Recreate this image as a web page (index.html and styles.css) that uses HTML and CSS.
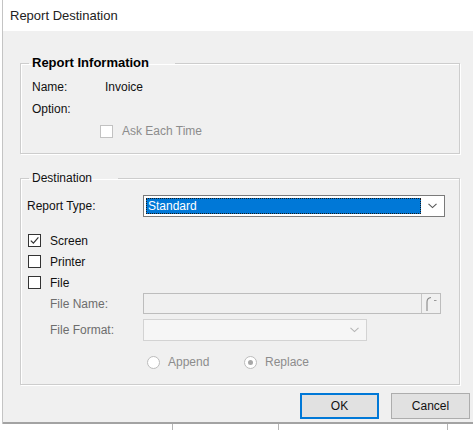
FILE: index.html
```html
<!DOCTYPE html>
<html lang="en">
<head>
    <meta charset="UTF-8">
    <meta name="viewport" content="width=device-width, initial-scale=1.0">
    <title>Report Destination</title>
    <link rel="stylesheet" href="styles.css">
</head>
<body>
    <div class="dialog">
        <div class="titlebar">Report Destination</div>
        <div class="client">
            <fieldset class="group info">
                <legend>Report Information</legend>
                <div class="row">
                    <span class="label">Name:</span>
                    <span>Invoice</span>
                </div>
                <div class="row">
                    <span class="label">Option:</span>
                </div>
                <div class="row ask">
                    <span class="check disabled"></span>
                    <span class="muted">Ask Each Time</span>
                </div>
            </fieldset>

            <fieldset class="group dest">
                <legend>Destination</legend>
                <div class="row type-row">
                    <span class="label type-label">Report Type:</span>
                    <div class="combo">
                        <span class="selected">Standard</span>
                        <span class="arrow">
                            <svg width="9" height="6" viewBox="0 0 9 6"><path d="M0.5 0.8 L4.5 4.6 L8.5 0.8" fill="none" stroke="#555" stroke-width="1.1"/></svg>
                        </span>
                    </div>
                </div>
                <div class="checks">
                    <div class="crow">
                        <span class="check">
                            <svg width="11" height="11" viewBox="0 0 11 11"><path d="M1.8 5.6 L4.4 8.2 L9.4 2.4" fill="none" stroke="#333" stroke-width="1.2"/></svg>
                        </span>
                        Screen
                    </div>
                    <div class="crow"><span class="check"></span>Printer</div>
                    <div class="crow"><span class="check"></span>File</div>
                </div>
                <div class="row file-name">
                    <span class="label file-label">File Name:</span>
                    <div class="textbox">
                        <span class="browse">
                            <svg width="18" height="19" viewBox="0 0 18 19"><path d="M5 17 L5 8 Q5 4 9 3.5" fill="none" stroke="#888" stroke-width="1.1"/><path d="M12 6.5 H14.5" stroke="#999" stroke-width="1"/></svg>
                        </span>
                    </div>
                </div>
                <div class="row file-format">
                    <span class="label file-label">File Format:</span>
                    <div class="combo off">
                        <span class="arrow">
                            <svg width="9" height="6" viewBox="0 0 9 6"><path d="M0.5 0.8 L4.5 4.6 L8.5 0.8" fill="none" stroke="#b5b5b5" stroke-width="1.1"/></svg>
                        </span>
                    </div>
                </div>
                <div class="radios">
                    <span class="radio"></span><span class="muted rlabel">Append</span>
                    <span class="radio on"></span><span class="muted">Replace</span>
                </div>
            </fieldset>

            <div class="buttons">
                <button class="btn default">OK</button>
                <button class="btn">Cancel</button>
            </div>
        </div>
    </div>
    <div class="behind">
        <span class="col c1"></span>
        <span class="col c2"></span>
        <span class="col c3"></span>
    </div>
</body>
</html>
```

FILE: styles.css
```css
body {
    margin: 0;
    background: #fff;
    font-family: "Liberation Sans", Arial, sans-serif;
    font-size: 12px;
    color: #111;
}
.dialog {
    margin-left: 2px;
    width: 470px;
    border-left: 1px solid #c4c4c4;
}
.titlebar {
    height: 31px;
    line-height: 31px;
    padding-left: 7px;
    font-size: 13px;
    color: #222;
    background: #fff;
}
.client {
    box-sizing: border-box;
    height: 393px;
    padding: 25px 3px 0 17px;
    background: #f0f0f0;
    border-bottom: 2px solid #a3a3a3;
}
.group {
    box-sizing: border-box;
    width: 440px;
    margin: 0;
    border: 1px solid #cdcdcd;
    box-shadow: inset 1px 1px 0 #fff, 1px 1px 0 #fff;
}
.group legend {
    line-height: 14px;
    padding: 0 26px 0 3px;
}
.info {
    padding: 6px 0 11px 11px;
}
.info legend {
    margin-left: -3px;
    font-size: 13px;
    font-weight: bold;
    color: #000;
}
.dest {
    margin-top: 17px;
    padding: 10px 0 12px 6px;
}
.dest legend {
    margin-left: 2px;
}
.row {
    display: flex;
    align-items: center;
    height: 22px;
}
.label {
    width: 73px;
}
.ask {
    padding-left: 68px;
}
.muted {
    color: #8c8c8c;
}
.check {
    box-sizing: border-box;
    width: 13px;
    height: 13px;
    border: 1px solid #333;
    background: #fff;
    display: flex;
    align-items: center;
    justify-content: center;
    margin-right: 9px;
}
.check.disabled {
    border-color: #c2c2c2;
}
.type-label {
    width: 116px;
}
.combo {
    box-sizing: border-box;
    width: 302px;
    height: 22px;
    border: 1px solid #7a7a7a;
    background: #fff;
    display: flex;
    align-items: center;
    padding: 2px;
}
.selected {
    width: 275px;
    height: 16px;
    line-height: 16px;
    padding-left: 2px;
    box-sizing: border-box;
    background: #0078d7;
    color: #fff;
    outline: 1px dotted #1a1a1a;
    outline-offset: -1px;
}
.arrow {
    margin-left: auto;
    width: 20px;
    display: flex;
    justify-content: center;
}
.checks {
    margin-top: 13px;
}
.crow {
    display: flex;
    align-items: center;
    height: 21px;
    padding-left: 1px;
}
.file-label {
    width: 93px;
    padding-left: 23px;
    color: #6d6d6d;
}
.file-name {
    height: 21px;
}
.textbox {
    box-sizing: border-box;
    width: 298px;
    height: 21px;
    border: 1px solid #bdbdbd;
    background: #f0f0f0;
    display: flex;
    justify-content: flex-end;
}
.browse {
    width: 18px;
    border-left: 1px solid #c6c6c6;
    display: flex;
}
.file-format {
    margin-top: 5px;
}
.combo.off {
    width: 224px;
    border-color: #d3d3d3;
    background: #f6f6f6;
}
.radios {
    display: flex;
    align-items: center;
    height: 20px;
    margin-top: 11px;
    padding-left: 120px;
    color: #6d6d6d;
}
.radio {
    box-sizing: border-box;
    width: 13px;
    height: 13px;
    border: 1px solid #bcbcbc;
    border-radius: 50%;
    background: #fff;
    margin-right: 8px;
    display: flex;
    align-items: center;
    justify-content: center;
}
.radio.on::after {
    content: "";
    width: 5px;
    height: 5px;
    border-radius: 50%;
    background: #a8a8a8;
}
.rlabel {
    width: 76px;
}
.buttons {
    display: flex;
    justify-content: flex-end;
    gap: 12px;
    margin-top: 8px;
}
.btn {
    box-sizing: border-box;
    width: 79px;
    height: 26px;
    border: 1px solid #adadad;
    background: #e1e1e1;
    font-family: "Liberation Sans", Arial, sans-serif;
    font-size: 12px;
    color: #111;
    padding: 0;
}
.btn.default {
    border-color: #0078d7;
    box-shadow: inset 0 0 0 1px #0078d7;
}
.behind {
    position: relative;
    height: 6px;
}
.col {
    position: absolute;
    top: 0;
    width: 1px;
    height: 6px;
    background: #b5b5b5;
}
.c1 { left: 172px; }
.c2 { left: 278px; }
.c3 { left: 447px; }
```
